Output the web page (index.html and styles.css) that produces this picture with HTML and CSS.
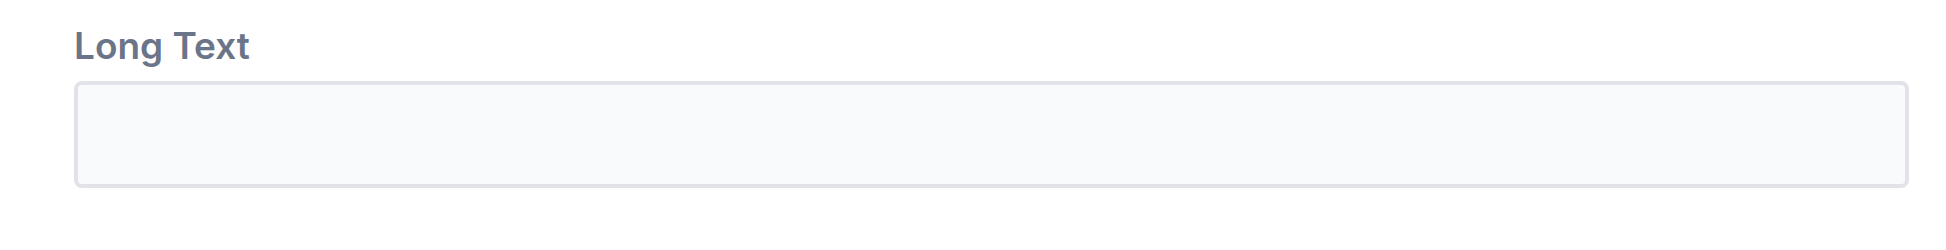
FILE: index.html
```html
<!DOCTYPE html>
<html lang="en">
<head>
    <meta charset="UTF-8">
    <title>Long Text</title>
    <link rel="stylesheet" href="styles.css">
</head>
<body>
<div class="field">
    <label class="field-label" for="longText">Long Text</label>
    <textarea class="field-input" id="longText"></textarea>
</div>
</body>
</html>
```

FILE: styles.css
```css
body {
    margin: 0;
    padding: 24px 37px 0 74px;
    font-family: Inter, "Noto Sans", sans-serif;
    background: #ffffff;
}

.field {
    display: flex;
    flex-direction: column;
}

.field-label {
    font-size: 37px;
    font-weight: 600;
    color: #6b7589;
    line-height: 44px;
    margin-bottom: 13px;
}

.field-input {
    height: 107px;
    box-sizing: border-box;
    background: #f9fafb;
    border: 4px solid #e2e3e8;
    border-radius: 8px;
    resize: none;
    outline: none;
}
```
